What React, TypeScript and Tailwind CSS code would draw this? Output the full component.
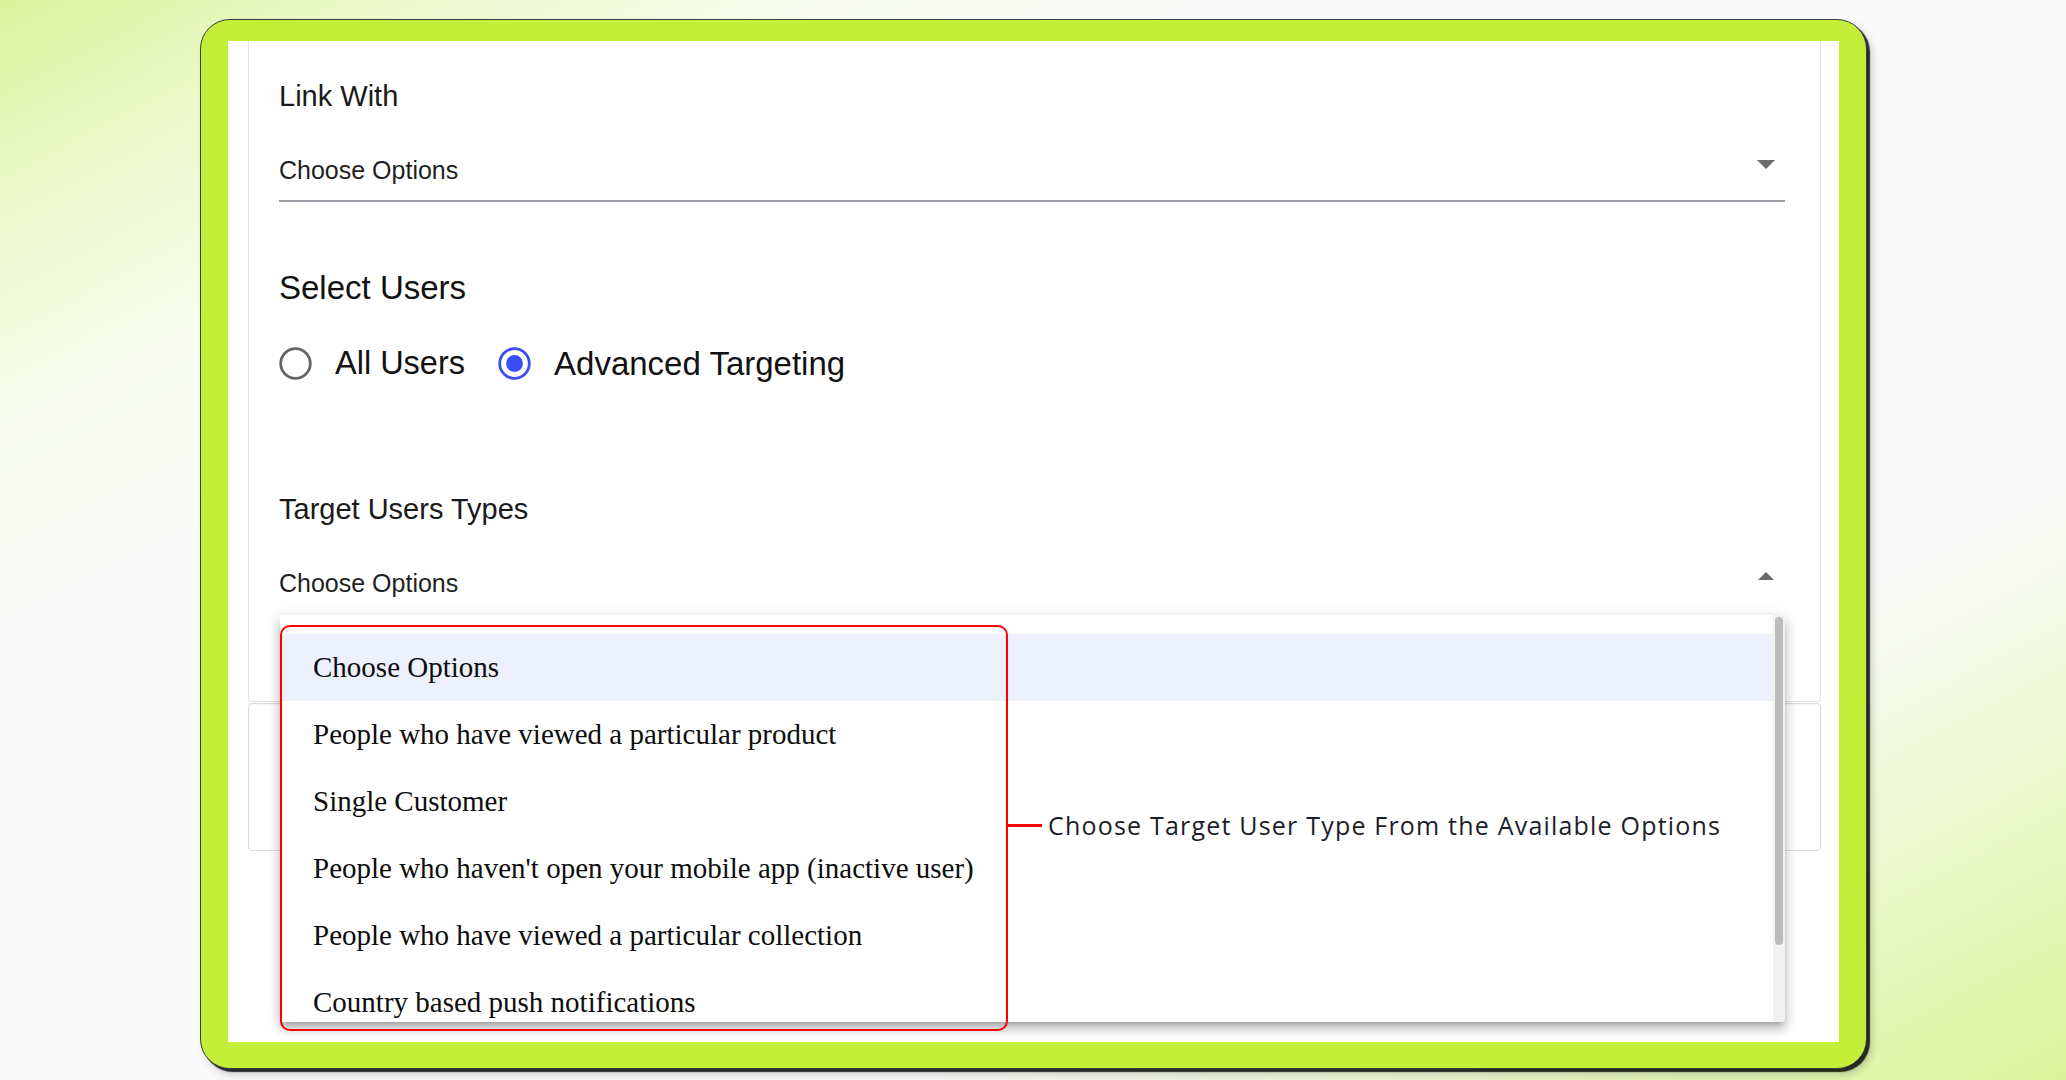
const TARGET_OPTIONS = [
  "Choose Options",
  "People who have viewed a particular product",
  "Single Customer",
  "People who haven't open your mobile app (inactive user)",
  "People who have viewed a particular collection",
  "Country based push notifications",
];

const ArrowDown = () => (
  <svg width="18" height="9" viewBox="0 0 18 9" className="mr-[10px] mt-[2px] shrink-0">
    <polygon points="0,0 18,0 9,9" fill="#6b6b6b" />
  </svg>
);

const ArrowUp = () => (
  <svg width="16" height="8" viewBox="0 0 16 8" className="mr-[11px] mt-[1px] shrink-0">
    <polygon points="0,8 16,8 8,0" fill="#6b6b6b" />
  </svg>
);

const RadioIcon = ({ checked }: { checked: boolean }) => (
  <svg width="33" height="33" viewBox="0 0 33 33" className="shrink-0">
    <circle
      cx="16.5"
      cy="16.5"
      r="14.8"
      fill="none"
      stroke={checked ? "#3b4ef5" : "#666666"}
      strokeWidth="2.8"
    />
    {checked && <circle cx="16.5" cy="16.5" r="8.4" fill="#3b4ef5" />}
  </svg>
);

type SelectRowProps = {
  open?: boolean;
  underline?: boolean;
};

const SelectRow = ({ open, underline }: SelectRowProps) => (
  <div
    className={`flex items-start justify-between ${
      underline ? "border-b-2 border-[#9d9da6] pb-[17px]" : ""
    }`}
  >
    <span className="text-[25px] leading-none text-[#1f1f1f]">Choose Options</span>
    {open ? <ArrowUp /> : <ArrowDown />}
  </div>
);

export default function App() {
  return (
    <div className="h-[1080px] w-full overflow-hidden bg-[linear-gradient(to_bottom_right,#d9f49b_0%,#ebf8c8_9%,#f8fcee_20%,#fafafa_30%,#fafafa_72%,#f0f9d9_82%,#dbf49a_100%)] pl-[200px] pt-[19px] font-['Liberation_Sans',Arial,sans-serif]">
      <div className="flex h-[1050px] w-[1667px] flex-col rounded-[30px] border border-[#3a3a3a] bg-[#c3ef3b] pb-[26px] pl-[27px] pr-[27px] pt-[21px] shadow-[3px_3px_1px_rgba(0,0,0,0.8),5px_6px_8px_rgba(0,0,0,0.18)]">
        <div className="relative flex-1 overflow-hidden bg-white">
          {/* form card */}
          <div className="ml-[20px] mr-[18px] h-[661px] rounded-b-[4px] border-x border-b border-[#e4e4e4] pl-[30px] pr-[35px] pt-[41px]">
            <div className="h-[29px] text-[29px] leading-none text-[#1a1a1a]">Link With</div>

            <div className="mt-[47px]">
              <SelectRow underline />
            </div>

            <div className="mt-[69px] h-[33px] text-[33px] leading-none text-[#111]">Select Users</div>

            <div className="mt-[43px] flex h-[33px] items-center">
              <RadioIcon checked={false} />
              <span className="ml-[23px] text-[32.5px] leading-none text-[#111]">All Users</span>
              <div className="ml-[33px]">
                <RadioIcon checked />
              </div>
              <span className="ml-[23px] text-[33px] leading-none text-[#111]">Advanced Targeting</span>
            </div>

            <div className="mt-[115px] h-[29px] text-[29px] leading-none text-[#1a1a1a]">
              Target Users Types
            </div>

            <div className="mt-[47px]">
              <SelectRow open />
            </div>
          </div>

          <div className="ml-[20px] mr-[18px] mt-[1px] h-[148px] rounded-[4px] border border-[#dcdcdc] shadow-[inset_0_1px_2px_rgba(0,0,0,0.04)]" />

          {/* open dropdown menu */}
          <div className="absolute left-[52px] top-[574px] flex h-[407px] w-[1505px] overflow-hidden rounded-[4px] bg-white shadow-[0_5px_5px_-3px_rgba(0,0,0,0.2),0_8px_10px_1px_rgba(0,0,0,0.14),0_3px_14px_2px_rgba(0,0,0,0.12)]">
            <ul className="flex-1 pt-[19px] font-['Liberation_Serif','Times_New_Roman',serif] text-[29px] text-[#0d0d0d]">
              {TARGET_OPTIONS.map((option, i) => (
                <li
                  key={option}
                  className={`h-[67px] whitespace-nowrap pl-[33px] leading-[67px] ${
                    i === 0 ? "bg-[#edf0fd]" : ""
                  }`}
                >
                  {option}
                </li>
              ))}
            </ul>
            <div className="flex w-[12px] flex-col bg-[#f1f1f1] px-[2px] pt-[2px]">
              <div className="h-[328px] rounded-full bg-[#bdbdbd]" />
            </div>
          </div>

          {/* annotation */}
          <div className="absolute left-[52px] top-[584px] h-[406px] w-[728px] rounded-[10px] border-2 border-[#ff0000]" />
          <div className="absolute left-[780px] top-[764px] flex h-[40px] items-center">
            <div className="h-[3px] w-[34px] bg-[#ff0000]" />
            <span className="ml-[6px] whitespace-nowrap font-['Open_Sans',sans-serif] text-[25px] leading-none tracking-[1.2px] text-[#1b1e28]">
              Choose Target User Type From the Available Options
            </span>
          </div>
        </div>
      </div>
    </div>
  );
}
